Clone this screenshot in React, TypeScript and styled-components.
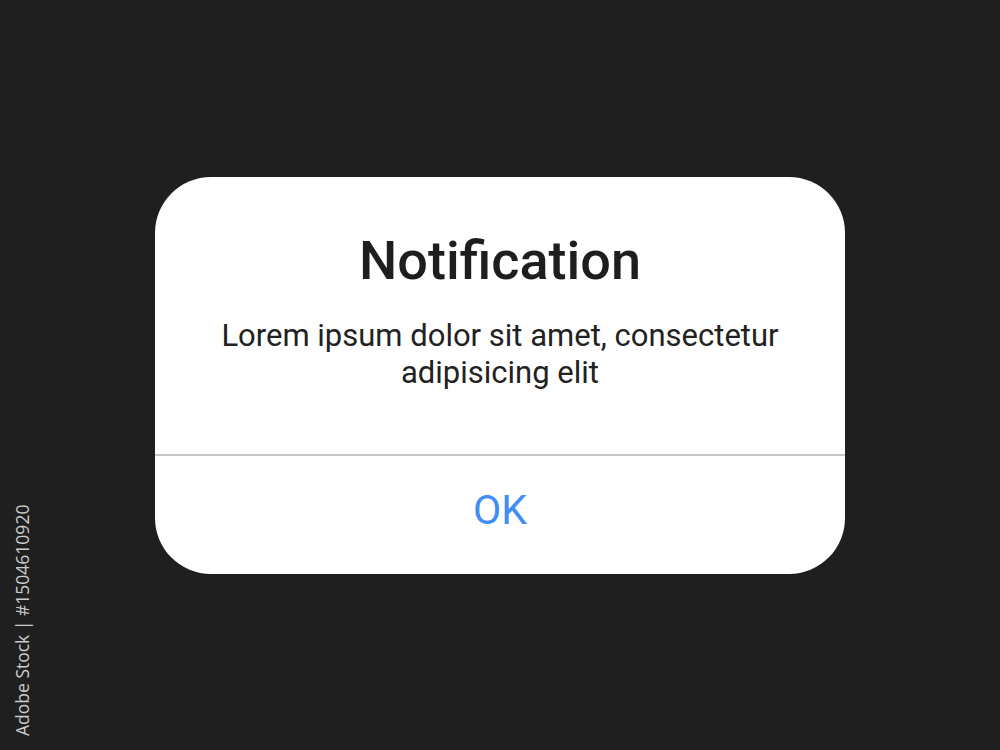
import styled, { createGlobalStyle } from 'styled-components'

const GlobalStyle = createGlobalStyle`
  html, body {
    margin: 0;
    padding: 0;
    background: #1f1f1f;
  }
  body {
    font-family: Roboto, "Liberation Sans", sans-serif;
  }
`

const App = () => {
  return (
    <Screen>
      <GlobalStyle />
      <Dialog role="dialog">
        <Content>
          <Title>Notification</Title>
          <Message>
            Lorem ipsum dolor sit amet, consectetur
            <br />
            adipisicing elit
          </Message>
        </Content>
        <Actions>
          <OkButton>OK</OkButton>
        </Actions>
      </Dialog>
      <StockLabel>Adobe Stock | #1504610920</StockLabel>
    </Screen>
  )
}

const Screen = styled.div`
  position: relative;
  height: 750px;
  display: flex;
  align-items: center;
  justify-content: center;
  overflow: hidden;
`

const Dialog = styled.div`
  width: 690px;
  background: #ffffff;
  border-radius: 56px;
  display: flex;
  flex-direction: column;
  overflow: hidden;
`

const Content = styled.div`
  padding: 53px 30px 0;
  height: 224px;
  text-align: center;
  border-bottom: 2px solid #c8c8c8;
`

const Title = styled.h1`
  margin: 0;
  font-size: 54px;
  line-height: 62px;
  font-weight: 500;
  color: #1e1e1e;
`

const Message = styled.p`
  margin: 25px 0 0;
  font-size: 31px;
  line-height: 37px;
  font-weight: 400;
  color: #222222;
`

const Actions = styled.div`
  height: 118px;
  display: flex;
  align-items: center;
  justify-content: center;
  padding-bottom: 10px;
  box-sizing: border-box;
`

const OkButton = styled.button`
  border: none;
  background: none;
  padding: 0;
  font-family: Roboto, "Liberation Sans", sans-serif;
  font-size: 41px;
  line-height: 48px;
  color: #3f8ef4;
  cursor: pointer;
`

const StockLabel = styled.div`
  position: absolute;
  left: 11px;
  bottom: 14px;
  transform: rotate(-90deg);
  transform-origin: left top;
  translate: 0 100%;
  font-family: "Open Sans", "Noto Sans", sans-serif;
  font-size: 17.5px;
  font-weight: 500;
  line-height: 22px;
  color: #cccccc;
  white-space: nowrap;
`

export default App
